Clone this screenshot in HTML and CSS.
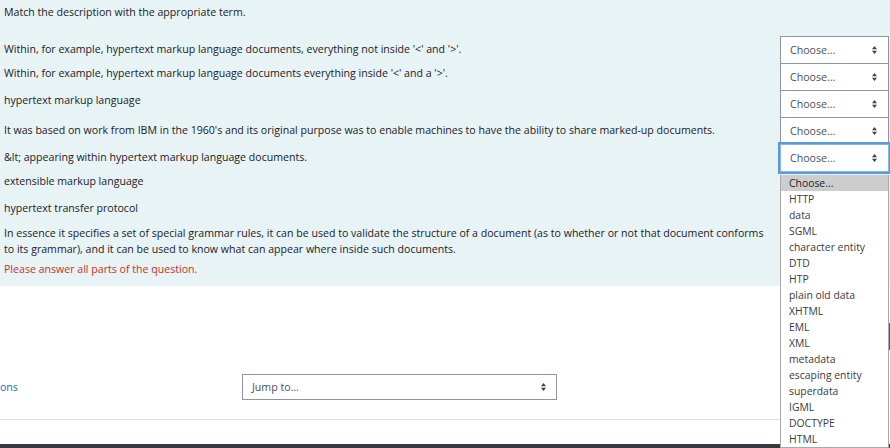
FILE: index.html
```html
<!DOCTYPE html>
<html>
<head>
<meta charset="utf-8">
<link rel="stylesheet" href="styles.css">
</head>
<body>
<div class="panel">
  <p class="prompt">Match the description with the appropriate term.</p>
  <div class="rows">
    <div class="row">
      <div class="desc">Within, for example, hypertext markup language documents, everything not inside '&lt;' and '&gt;'.</div>
      <div class="ctl"><div class="sel"><span>Choose...</span><svg class="arr" width="5" height="8" viewBox="0 0 5 8"><path d="M0 3.2 L2.5 0 L5 3.2 Z M0 4.8 L2.5 8 L5 4.8 Z" fill="#444"/></svg></div></div>
    </div>
    <div class="row t2">
      <div class="desc">Within, for example, hypertext markup language documents everything inside '&lt;' and a '&gt;'.</div>
      <div class="ctl"><div class="sel"><span>Choose...</span><svg class="arr" width="5" height="8" viewBox="0 0 5 8"><path d="M0 3.2 L2.5 0 L5 3.2 Z M0 4.8 L2.5 8 L5 4.8 Z" fill="#444"/></svg></div></div>
    </div>
    <div class="row t2">
      <div class="desc">hypertext markup language</div>
      <div class="ctl"><div class="sel"><span>Choose...</span><svg class="arr" width="5" height="8" viewBox="0 0 5 8"><path d="M0 3.2 L2.5 0 L5 3.2 Z M0 4.8 L2.5 8 L5 4.8 Z" fill="#444"/></svg></div></div>
    </div>
    <div class="row">
      <div class="desc">It was based on work from IBM in the 1960's and its original purpose was to enable machines to have the ability to share marked-up documents.</div>
      <div class="ctl"><div class="sel"><span>Choose...</span><svg class="arr" width="5" height="8" viewBox="0 0 5 8"><path d="M0 3.2 L2.5 0 L5 3.2 Z M0 4.8 L2.5 8 L5 4.8 Z" fill="#444"/></svg></div></div>
    </div>
    <div class="row">
      <div class="desc">&amp;lt; appearing within hypertext markup language documents.</div>
      <div class="ctl open">
        <div class="sel focus"><span>Choose...</span><svg class="arr" width="5" height="8" viewBox="0 0 5 8"><path d="M0 3.2 L2.5 0 L5 3.2 Z M0 4.8 L2.5 8 L5 4.8 Z" fill="#444"/></svg></div>
        <ul class="menu">
          <li class="hl">Choose...</li>
          <li>HTTP</li>
          <li>data</li>
          <li>SGML</li>
          <li>character entity</li>
          <li>DTD</li>
          <li>HTP</li>
          <li>plain old data</li>
          <li>XHTML</li>
          <li>EML</li>
          <li>XML</li>
          <li>metadata</li>
          <li>escaping entity</li>
          <li>superdata</li>
          <li>IGML</li>
          <li>DOCTYPE</li>
          <li>HTML</li>
        </ul>
      </div>
    </div>
    <div class="row t2">
      <div class="desc">extensible markup language</div>
      <div class="ctl"></div>
    </div>
    <div class="row t2">
      <div class="desc">hypertext transfer protocol</div>
      <div class="ctl"></div>
    </div>
    <div class="row t0">
      <div class="desc">In essence it specifies a set of special grammar rules, it can be used to validate the structure of a document (as to whether or not that document conforms to its grammar), and it can be used to know what can appear where inside such documents.</div>
      <div class="ctl"></div>
    </div>
  </div>
  <p class="warn">Please answer all parts of the question.</p>
</div>
<div class="nav">
  <a class="prev" href="#">ons</a>
  <div class="sel jump"><span>Jump to...</span><svg class="arr" width="5" height="8" viewBox="0 0 5 8"><path d="M0 3.2 L2.5 0 L5 3.2 Z M0 4.8 L2.5 8 L5 4.8 Z" fill="#444"/></svg></div>
  <div class="spacer"></div>
  <div class="next"></div>
</div>
<div class="rule"></div>
<div class="gap"></div>
<div class="footer"></div>
</body>
</html>
```
FILE: styles.css
```css
html, body {
  margin: 0;
  padding: 0;
  width: 890px;
  height: 448px;
  overflow: hidden;
  background: #fff;
}
body {
  font-family: "Open Sans", "Noto Sans", sans-serif;
  font-size: 10.6px;
  color: #1d2125;
}
.panel {
  background: #e7f3f5;
  padding: 4px 1px 9px 4px;
}
.prompt {
  margin: 0;
  line-height: 16px;
}
.rows {
  margin-top: 16px;
  display: flex;
  flex-direction: column;
}
.row {
  display: grid;
  grid-template-columns: 1fr 109px;
  column-gap: 8px;
  min-height: 27px;
}
.desc {
  line-height: 16px;
  padding-top: 5px;
}
.row.t2 .desc { padding-top: 2px; }
.row.t0 .desc { padding-top: 0; }
.ctl {
  position: relative;
  height: 27px;
}
.sel {
  box-sizing: border-box;
  height: 28px;
  background: #fff;
  border: 1px solid #8f959e;
  display: flex;
  align-items: center;
  justify-content: space-between;
  padding: 0 11px 0 9px;
  color: #495057;
}
.sel.focus {
  border-color: #86b7e8;
  box-shadow: 0 0 0 2px #5a9ad8;
  position: relative;
  z-index: 2;
}
.arr { display: block; }
.menu {
  position: absolute;
  top: 31px;
  left: 0;
  width: 109px;
  box-sizing: border-box;
  margin: 0;
  padding: 0;
  list-style: none;
  background: #fff;
  border: 1px solid #a8a8a8;
  border-top: none;
  z-index: 3;
}
.menu li {
  height: 16px;
  line-height: 16px;
  padding-left: 8px;
  color: #3a3a3a;
  font-size: 10.4px;
}
.menu li.hl {
  background: #cdcdcd;
  color: #1d1d1d;
}
.warn {
  margin: 4px 0 0;
  line-height: 16px;
  color: #ca3120;
}
.nav {
  height: 133px;
  display: grid;
  grid-template-columns: 242px 315px 332px 100px;
  align-items: start;
  overflow: hidden;
}
.prev {
  margin-top: 93px;
  line-height: 16px;
  color: #0f6cbf;
  text-decoration: none;
}
.jump {
  margin-top: 88px;
  height: 26px;
  padding: 0 10px 0 9px;
}
.next {
  margin-top: 37px;
  height: 27px;
  background: #0f6cbf;
}
.rule {
  height: 1px;
  background: #dee2e6;
}
.gap { height: 24px; }
.footer {
  height: 10px;
  background: #343a40;
}
```
